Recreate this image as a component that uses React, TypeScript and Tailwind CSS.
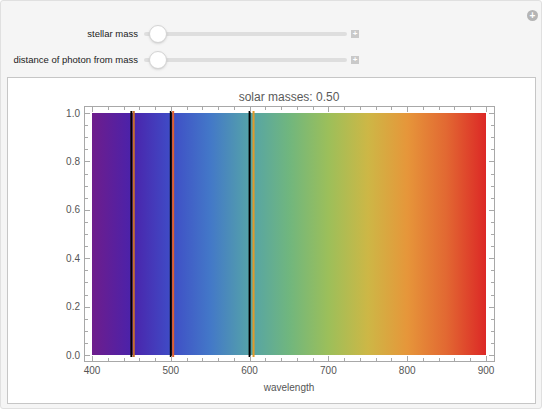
import React from "react";

const font = '"Liberation Sans", Arial, sans-serif';

const stops = [
  ["0%", "#6e1d8c"],
  ["10%", "#4b22aa"],
  ["20%", "#3f4cc6"],
  ["30%", "#4378c8"],
  ["40%", "#55a3a8"],
  ["50%", "#70b67e"],
  ["60%", "#9cbf5a"],
  ["70%", "#cdb746"],
  ["80%", "#e6963a"],
  ["90%", "#e26832"],
  ["100%", "#dc2826"],
];

// spectral lines: [wavelength, colour]
const lines: [number, string][] = [
  [450, "#000000"],
  [453, "#c8702c"],
  [500, "#000000"],
  [503, "#e0602e"],
  [600, "#000000"],
  [605, "#e09a2a"],
];

const px = (w: number) => 91 + (w - 400) * 0.788;
const py = (v: number) => 355 - v * 242;

function Slider({ label }: { label: string }) {
  return (
    <div className="flex items-center h-[26px]">
      <div className="w-[143px] text-right text-[9.5px] text-[#222] pr-[6px]">{label}</div>
      <div className="relative w-[203px] h-[18px] flex items-center">
        <div className="w-full h-[4px] rounded-full bg-[#dedede]" />
        <div className="absolute left-[5px] top-0 w-[18px] h-[18px] rounded-full bg-white border border-[#d4d4d4] shadow-sm" />
      </div>
      <div className="ml-[4px] w-[8px] h-[8px] bg-[#c9c9c9] flex items-center justify-center text-white text-[8px] leading-none font-bold">
        +
      </div>
    </div>
  );
}

function Plot() {
  const xMinor: number[] = [];
  for (let w = 400; w <= 900; w += 20) xMinor.push(w);
  const yMinor: number[] = [];
  for (let i = 0; i <= 20; i++) yMinor.push(i / 20);

  return (
    <svg width={528} height={326} viewBox="7 78 528 326" style={{ fontFamily: font }}>
      <defs>
        <linearGradient id="spec" x1="0" y1="0" x2="1" y2="0">
          {stops.map(([o, c]) => (
            <stop key={o} offset={o} stopColor={c} />
          ))}
        </linearGradient>
      </defs>

      <text x={288} y={101} textAnchor="middle" fontSize={12} fill="#5a5a5a">
        solar masses: 0.50
      </text>

      <rect x={91} y={113} width={394} height={242} fill="url(#spec)" />

      {lines.map(([w, c]) => (
        <rect key={w} x={px(w) - 1} y={111} width={2} height={246} fill={c} />
      ))}

      <rect x={83.5} y={106.5} width={410} height={255} fill="none" stroke="#a8a8a8" strokeWidth={1} />

      {/* x ticks, bottom and top */}
      {xMinor.map((w) => {
        const major = w % 100 === 0;
        const l = major ? 5 : 3;
        const x = Math.round(px(w)) + 0.5;
        return (
          <g key={w} stroke="#a8a8a8" strokeWidth={1}>
            <line x1={x} y1={361} x2={x} y2={361 - l} />
            <line x1={x} y1={107} x2={x} y2={107 + l} />
          </g>
        );
      })}

      {/* y ticks, left and right */}
      {yMinor.map((v, i) => {
        const major = i % 4 === 0;
        const l = major ? 5 : 3;
        const y = Math.round(py(v)) + 0.5;
        return (
          <g key={i} stroke="#a8a8a8" strokeWidth={1}>
            <line x1={84} y1={y} x2={84 + l} y2={y} />
            <line x1={493} y1={y} x2={493 - l} y2={y} />
          </g>
        );
      })}

      {[0, 0.2, 0.4, 0.6, 0.8, 1].map((v) => (
        <text key={v} x={79} y={py(v) + 3.5} textAnchor="end" fontSize={10} fill="#555">
          {v.toFixed(1)}
        </text>
      ))}

      {[400, 500, 600, 700, 800, 900].map((w) => (
        <text key={w} x={px(w)} y={374} textAnchor="middle" fontSize={10} fill="#555">
          {w}
        </text>
      ))}

      <text x={288} y={391} textAnchor="middle" fontSize={10} fill="#555">
        wavelength
      </text>
    </svg>
  );
}

export default function App() {
  return (
    <div className="w-[544px] h-[413px] bg-white" style={{ fontFamily: font }}>
      <div className="relative w-[542px] h-[409px] bg-[#f5f5f5] border border-[#e0e0e0] rounded-[3px]">
        {/* add-bookmark icon */}
        <div className="absolute right-[3px] top-[9px] w-[11px] h-[11px] rounded-full bg-[#b5b5b5] flex items-center justify-center text-white text-[10px] leading-none font-bold">
          +
        </div>

        <div className="pt-[20px] flex flex-col">
          <Slider label="stellar mass" />
          <Slider label="distance of photon from mass" />
        </div>

        <div className="ml-[6px] mt-[4px] w-[529px] h-[327px] bg-white border border-[#c6c6c6]">
          <Plot />
        </div>
      </div>
    </div>
  );
}
